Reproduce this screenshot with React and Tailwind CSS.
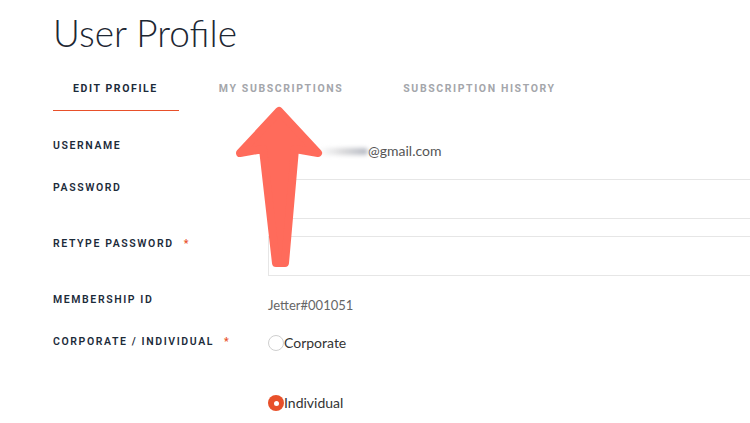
import React from 'react';

const labelCls =
  "w-[215px] shrink-0 font-['Roboto',sans-serif] text-[10.5px] font-semibold tracking-[1.6px] text-[#1c2b3a] leading-[16px]";

const Star = () => <span className="ml-[10px] text-[#e8502a]">*</span>;

const Radio = ({ checked, label, className = '' }) => (
  <div className={`flex items-center ${className}`}>
    {checked ? (
      <span className="w-4 h-4 rounded-full bg-[#e8502a] flex items-center justify-center">
        <span className="w-[5px] h-[5px] rounded-full bg-white"></span>
      </span>
    ) : (
      <span className="w-4 h-4 rounded-full border border-[#cfcfcf] bg-white"></span>
    )}
    <span className="font-['Lato',sans-serif] text-[14px] leading-[16px] text-[#333]">{label}</span>
  </div>
);

const App = () => {
  return (
    <div className="relative w-[750px] h-[423px] overflow-hidden bg-white">
      <div className="pl-[53px]">
        {/* Title */}
        <h1 className="pt-[10px] h-[60px] font-['Lato',sans-serif] font-light text-[37px] leading-[46px] text-[#1d2733]">
          User Profile
        </h1>

        {/* Tabs */}
        <div className="mt-[14px] flex gap-5 font-['Roboto',sans-serif] text-[10.5px] font-bold tracking-[1.6px] leading-[16px]">
          <div className="h-[37px] pl-5 pr-[21px] pt-[7px] border-b border-[#e8502a] text-[#1c2b3a]">EDIT PROFILE</div>
          <div className="h-[37px] px-5 pt-[7px] text-[#a4a6ab]">MY SUBSCRIPTIONS</div>
          <div className="h-[37px] px-5 pt-[7px] text-[#a4a6ab]">SUBSCRIPTION HISTORY</div>
        </div>

        {/* Username */}
        <div className="mt-[27px] flex">
          <div className={labelCls}>USERNAME</div>
          <div className="pt-[5px] flex items-center">
            <span className="ml-[50px] w-[50px] h-[7px] rounded-full bg-gradient-to-r from-transparent via-[#d9d9db] to-[#b4b8c2] blur-[2px]"></span>
            <span className="font-['Lato',sans-serif] text-[14px] leading-[16px] text-[#555]">@gmail.com</span>
          </div>
        </div>

        {/* Password */}
        <div className="mt-[20px] flex">
          <div className={`${labelCls} pt-[1px]`}>PASSWORD</div>
          <div className="w-[520px] h-[40px] shrink-0 border border-[#e6e6e6]"></div>
        </div>

        {/* Retype password */}
        <div className="mt-[17px] flex">
          <div className={labelCls}>
            RETYPE PASSWORD<Star />
          </div>
          <div className="w-[520px] h-[40px] shrink-0 border border-[#e6e6e6]"></div>
        </div>

        {/* Membership */}
        <div className="mt-[16px] flex">
          <div className={labelCls}>MEMBERSHIP ID</div>
          <div className="pt-[5px] font-['Lato',sans-serif] text-[13px] leading-[16px] text-[#666]">Jetter#001051</div>
        </div>

        {/* Corporate / Individual */}
        <div className="mt-[21px] flex">
          <div className={labelCls}>
            CORPORATE / INDIVIDUAL<Star />
          </div>
          <div className="pt-[1px]">
            <Radio label="Corporate" />
            <Radio checked label="Individual" className="mt-[44px]" />
          </div>
        </div>
      </div>

      {/* Annotation arrow */}
      <svg className="absolute left-0 top-0 pointer-events-none" width="750" height="423" viewBox="0 0 750 423">
        <polygon
          points="279,111 318,153 295,149 285,263 276,263 263,149 240,153"
          fill="#ff6b5b"
          stroke="#ff6b5b"
          strokeWidth="8"
          strokeLinejoin="round"
        />
      </svg>
    </div>
  );
};

export default App;
